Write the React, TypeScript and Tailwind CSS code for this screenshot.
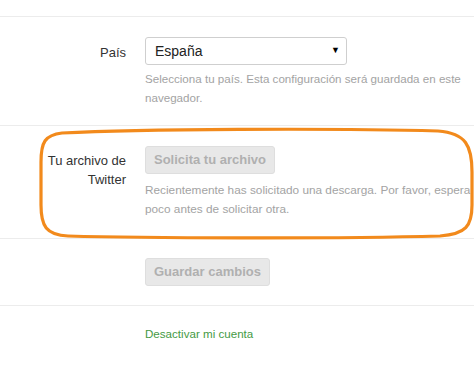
export default function App() {
  return (
    <div
      className="relative w-[474px] h-[365px] bg-white overflow-hidden text-[13px] text-[#333]"
      style={{ fontFamily: '"Liberation Sans", Arial, sans-serif' }}
    >
      <div className="pt-4">
        {/* País */}
        <div className="flex border-t border-[#ececec] pt-5 pb-[18px]">
          <div className="w-[126px] shrink-0 pl-10 text-right leading-[19px] pt-[6px]">País</div>
          <div className="ml-[19px] flex-1">
            <div className="flex h-7 w-[202px] items-center justify-between rounded-[3px] border border-[#cfcfcf] bg-white pl-[9px] pr-[6px] text-[14px] text-[#222]">
              <span>España</span>
              <span className="text-[9px] text-black">▼</span>
            </div>
            <p className="mt-1 leading-[19px] text-[11.6px] text-[#a3a3a3] w-[326px]">
              Selecciona tu país. Esta configuración será guardada en este navegador.
            </p>
          </div>
        </div>

        {/* Archivo */}
        <div className="flex border-t border-[#ececec] pt-5 pb-[19px]">
          <div className="w-[126px] shrink-0 pl-[40px] text-right leading-[19px] pt-[5px]">
            Tu archivo de Twitter
          </div>
          <div className="ml-[19px] flex-1">
            <button className="h-7 rounded-[3px] border border-[#dedede] bg-[#e8e8e8] px-2 text-[13px] font-bold text-[#b0b0b0]">
              Solicita tu archivo
            </button>
            <p className="mt-[7px] leading-[19px] text-[11.8px] text-[#a3a3a3] whitespace-nowrap">
              Recientemente has solicitado una descarga. Por favor, espera
              <br />
              poco antes de solicitar otra.
            </p>
          </div>
        </div>

        {/* Guardar */}
        <div className="flex border-t border-[#ececec] pt-[19px] pb-[19px]">
          <div className="w-[126px] shrink-0" />
          <div className="ml-[19px]">
            <button className="h-7 rounded-[3px] border border-[#dedede] bg-[#e8e8e8] px-2 text-[13px] font-bold text-[#b0b0b0]">
              Guardar cambios
            </button>
          </div>
        </div>

        {/* Desactivar */}
        <div className="flex border-t border-[#ececec] pt-[18px]">
          <div className="w-[126px] shrink-0" />
          <a className="ml-[19px] leading-[19px] text-[11.6px] text-[#449a44]" href="#">
            Desactivar mi cuenta
          </a>
        </div>
      </div>

      {/* annotation */}
      <svg
        className="absolute left-0 top-0 pointer-events-none"
        width="474"
        height="365"
        viewBox="0 0 474 365"
      >
        <path
          d="M62 133 C140 129 330 128 438 131 C466 133 472 146 472 172 L472 205 C472 226 466 234 440 236 C330 239 140 238 68 236 C46 235 41 226 41 205 L41 162 C41 142 45 135 62 133 Z"
          fill="none"
          stroke="#f28a1c"
          strokeWidth="3.2"
        />
      </svg>
    </div>
  );
}
